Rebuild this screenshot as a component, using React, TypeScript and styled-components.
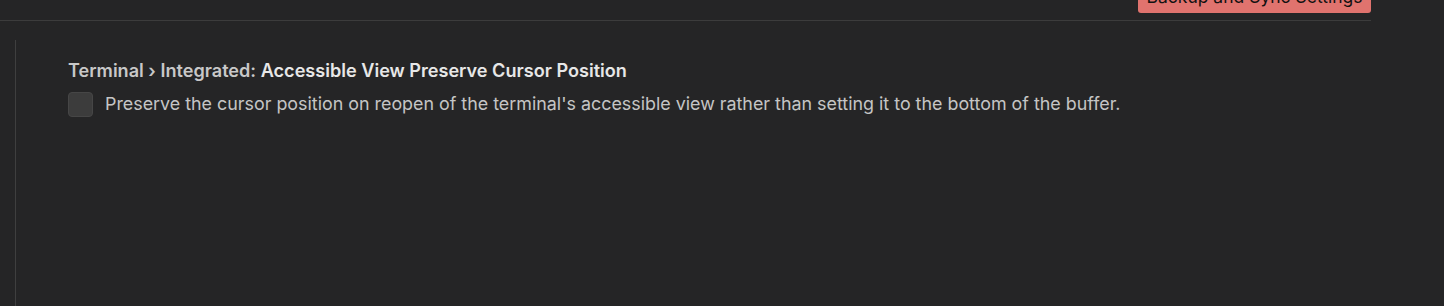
import React from "react";
import styled, { createGlobalStyle } from "styled-components";

const Global = createGlobalStyle`
  html, body { margin: 0; padding: 0; background: #252526; }
  body { font-family: Inter, "Open Sans", "Liberation Sans", sans-serif; overflow: hidden; }
  #root { height: 306px; }
`;

const Page = styled.div`
  height: 306px;
  background: #252526;
  display: flex;
  flex-direction: column;
  overflow: hidden;
`;

const Header = styled.div`
  width: 1371px;
  height: 20px;
  border-bottom: 1px solid #3c3c3c;
  display: flex;
  justify-content: flex-end;
  align-items: flex-end;
  overflow: visible;
`;

const SyncButton = styled.button`
  margin-bottom: 7px;
  width: 233px;
  height: 34px;
  border: none;
  border-radius: 3px;
  background: #e0736e;
  color: #111;
  font-family: Inter, "Liberation Sans", sans-serif;
  font-size: 17.5px;
  padding: 0;
  flex: none;
`;

const Body = styled.div`
  flex: 1;
  margin-top: 19px;
  margin-left: 15px;
  border-left: 1px solid #3f3f3f;
  padding: 17px 0 0 52px;
`;

const Title = styled.div`
  font-size: 18.1px;
  line-height: 26px;
  font-weight: 600;
  color: #e7e7e7;
`;

const Category = styled.span`
  color: #c8c8c8;
`;

const Row = styled.label`
  display: flex;
  align-items: center;
  gap: 12px;
  margin-top: 8px;
`;

const Check = styled.span`
  width: 25px;
  height: 25px;
  flex: none;
  box-sizing: border-box;
  border-radius: 4px;
  background: #3c3c3c;
  border: 1px solid #464646;
`;

const Desc = styled.span`
  font-size: 17.88px;
  line-height: 26px;
  color: #c5c5c5;
`;

export default function App() {
  return (
    <Page>
      <Global />
      <Header>
        <SyncButton>Backup and Sync Settings</SyncButton>
      </Header>
      <Body>
        <Title>
          <Category>Terminal › Integrated: </Category>
          Accessible View Preserve Cursor Position
        </Title>
        <Row>
          <Check />
          <Desc>
            Preserve the cursor position on reopen of the terminal's accessible view rather than setting it to the bottom of the buffer.
          </Desc>
        </Row>
      </Body>
    </Page>
  );
}
